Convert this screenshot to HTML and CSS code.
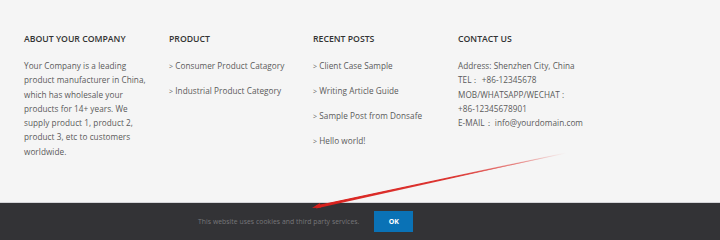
FILE: index.html
```html
<!DOCTYPE html>
<html>
<head>
<meta charset="utf-8">
<link rel="stylesheet" href="styles.css">
</head>
<body>
<div class="page">
  <footer class="footer">
    <section class="col">
      <h3 class="title">ABOUT YOUR COMPANY</h3>
      <p class="about">Your Company is a leading product manufacturer in China, which has wholesale your products for 14+ years. We supply product 1, product 2, product 3, etc to customers worldwide.</p>
    </section>
    <section class="col">
      <h3 class="title">PRODUCT</h3>
      <ul class="links">
        <li><span class="chev">&gt;</span> Consumer Product Catagory</li>
        <li><span class="chev">&gt;</span> Industrial Product Category</li>
      </ul>
    </section>
    <section class="col">
      <h3 class="title">RECENT POSTS</h3>
      <ul class="links">
        <li><span class="chev">&gt;</span> Client Case Sample</li>
        <li><span class="chev">&gt;</span> Writing Article Guide</li>
        <li><span class="chev">&gt;</span> Sample Post from Donsafe</li>
        <li><span class="chev">&gt;</span> Hello world!</li>
      </ul>
    </section>
    <section class="col">
      <h3 class="title">CONTACT US</h3>
      <div class="contact">
        <div>Address: Shenzhen City, China</div>
        <div>TEL： +86-12345678</div>
        <div>MOB/WHATSAPP/WECHAT :</div>
        <div>+86-12345678901</div>
        <div>E-MAIL： info@yourdomain.com</div>
      </div>
    </section>
  </footer>
  <div class="cookie">
    <span class="cookie-text">This website uses cookies and third party services.</span>
    <button class="ok">OK</button>
  </div>
  <svg class="arrow" width="720" height="240" viewBox="0 0 720 240">
    <defs>
      <linearGradient id="fade" x1="313" y1="207" x2="566" y2="153" gradientUnits="userSpaceOnUse">
        <stop offset="0" stop-color="#d9201c" stop-opacity="1"/>
        <stop offset="0.55" stop-color="#d9201c" stop-opacity="0.85"/>
        <stop offset="1" stop-color="#d9201c" stop-opacity="0"/>
      </linearGradient>
    </defs>
    <path d="M566 153 L318 205.5 L316 208.5 Z" fill="url(#fade)"/>
    <path d="M566 153 L316 206" stroke="url(#fade)" stroke-width="1.2" fill="none"/>
    <path d="M312 208 L320 203 L321 207.5 Z" fill="#d9201c"/>
  </svg>
</div>
</body>
</html>
```

FILE: styles.css
```css
* { box-sizing: border-box; }
html, body { margin: 0; padding: 0; }
body {
  width: 720px;
  height: 240px;
  overflow: hidden;
  background: #f5f5f5;
  font-family: "Open Sans", "Liberation Sans", sans-serif;
}
.page {
  position: relative;
  width: 720px;
  height: 240px;
  display: flex;
  flex-direction: column;
}
.footer {
  flex: 1;
  display: grid;
  grid-template-columns: 145px 144px 145px 150px;
  padding: 33px 0 0 24px;
  align-content: start;
}
.title {
  margin: 0 0 14px;
  font-size: 8.7px;
  line-height: 12px;
  font-weight: 600;
  color: #333;
}
.about, .contact, .links {
  margin: 0;
  font-size: 8.2px;
  line-height: 14.3px;
  color: #5a5a5a;
  letter-spacing: 0.05px;
}
.about { width: 122px; }
.links {
  list-style: none;
  padding: 0;
}
.links li {
  height: 14px;
  line-height: 14px;
  margin-bottom: 11px;
  white-space: nowrap;
}
.chev { font-size: 7px; line-height: 1; color: #666; }
.contact div { white-space: nowrap; }
.cookie {
  height: 38px;
  border-top: 1px solid #d4d4d8;
  background: #333336;
  display: flex;
  align-items: center;
  padding-left: 198px;
  gap: 15px;
}
.cookie-text {
  font-size: 6.8px;
  color: #77777a;
  letter-spacing: 0.05px;
}
.ok {
  width: 39px;
  height: 21px;
  border: 0;
  padding: 0;
  background: #0a72b6;
  color: #fff;
  font-family: "Open Sans", "Liberation Sans", sans-serif;
  font-size: 7px;
  font-weight: 700;
}
.arrow {
  position: absolute;
  left: 0;
  top: 0;
  pointer-events: none;
}
```
